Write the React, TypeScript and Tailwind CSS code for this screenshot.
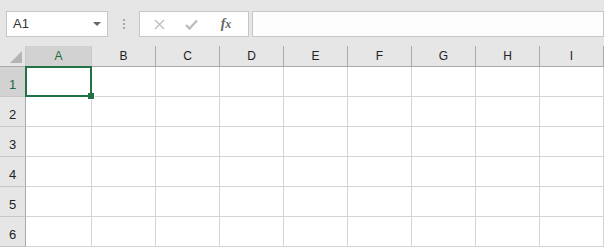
import React from "react";

const columns = ["A", "B", "C", "D", "E", "F", "G", "H", "I"];
const widths = ["w-[66px]", "w-[64px]", "w-[64px]", "w-[64px]", "w-[64px]", "w-[64px]", "w-[64px]", "w-[64px]", "w-[64px]"];
const rows = [1, 2, 3, 4, 5, 6];

export default function App() {
  return (
    <div
      className="w-[604px] h-[247px] overflow-hidden bg-[#e6e6e6] text-[#222]"
      style={{ fontFamily: '"Liberation Sans", Arial, sans-serif' }}
    >
      {/* Formula bar */}
      <div className="h-[46px] flex items-start pt-[11px] pl-[6px]">
        <div className="w-[102px] h-[26px] bg-white border border-[#c6c6c6] flex items-center justify-between pl-[6px] pr-[6px]">
          <span className="text-[13px] text-[#333]">A1</span>
          <svg width="8" height="5" viewBox="0 0 8 5">
            <path d="M0 0 H8 L4 4 Z" fill="#666" />
          </svg>
        </div>
        <div className="w-[31px] h-[26px] flex flex-col items-center justify-center gap-[2px]">
          <span className="w-[2px] h-[2px] bg-[#a6a6a6]" />
          <span className="w-[2px] h-[2px] bg-[#a6a6a6]" />
          <span className="w-[2px] h-[2px] bg-[#a6a6a6]" />
        </div>
        <div className="w-[110px] h-[26px] bg-white border border-[#c6c6c6] flex items-center">
          <div className="w-[38px] flex justify-center">
            <svg width="11" height="11" viewBox="0 0 11 11">
              <path d="M1 1 L10 10 M10 1 L1 10" stroke="#bdbdbd" strokeWidth="1.3" />
            </svg>
          </div>
          <div className="w-[26px] flex justify-center">
            <svg width="13" height="11" viewBox="0 0 13 11">
              <path d="M1 6 L4.5 9.5 L12 1.5" stroke="#bdbdbd" strokeWidth="2.4" fill="none" />
            </svg>
          </div>
          <div className="flex-1 flex justify-center">
            <span
              className="italic font-bold text-[14px] text-[#666] leading-none"
              style={{ fontFamily: '"Liberation Serif", "Times New Roman", serif' }}
            >
              f<span className="text-[12px]">x</span>
            </span>
          </div>
        </div>
        <div className="ml-[3px] flex-1 h-[26px] bg-[#fdfdfd] border border-[#c6c6c6]" />
      </div>

      {/* Column headers */}
      <div className="flex h-[21px] border-b border-[#a8a8a8]">
        <div className="w-[26px] border-r border-[#c9c9c9] flex items-end justify-end pr-[3px] pb-[3px]">
          <svg width="12" height="12" viewBox="0 0 12 12">
            <path d="M12 0 V12 H0 Z" fill="#b4b4b4" />
          </svg>
        </div>
        {columns.map((c, i) => (
          <div
            key={c}
            className={`${widths[i]} shrink-0 flex items-center justify-center text-[12px] border-r ${
              i === 0 ? "bg-[#d2d2d2] border-[#c9c9c9] text-[#1e6b41]" : "border-[#ababab]"
            }`}
          >
            {c}
          </div>
        ))}
      </div>

      {/* Grid */}
      <div className="relative">
        {rows.map((r) => (
          <div key={r} className="flex h-[30px]">
            <div
              className={`w-[26px] shrink-0 flex items-end justify-center pb-[2px] text-[13px] border-r border-b border-r-[#a8a8a8] border-b-[#c6c6c6] ${
                r === 1 ? "bg-[#d2d2d2] text-[#1e6b41]" : "bg-[#e6e6e6]"
              }`}
            >
              {r}
            </div>
            {columns.map((c, i) => (
              <div key={c} className={`${widths[i]} shrink-0 bg-white border-r border-b border-[#d4d4d4]`} />
            ))}
          </div>
        ))}
        {/* Active cell selection */}
        <div className="absolute left-[25px] top-[-1px] w-[67px] h-[31px] border-2 border-[#217346]" />
        <div className="absolute left-[88px] top-[26px] w-[7px] h-[7px] bg-[#217346] border-r border-b border-white" />
      </div>
    </div>
  );
}
